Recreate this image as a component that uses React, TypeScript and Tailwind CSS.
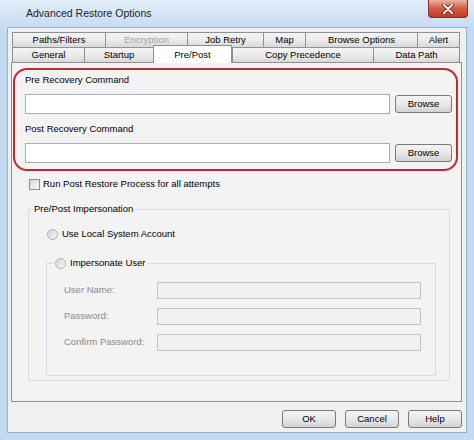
import React from "react"

const tabRow1: [string, number, boolean?][] = [
  ["Paths/Filters", 93],
  ["Encryption", 82, true],
  ["Job Retry", 76],
  ["Map", 42],
  ["Browse Options", 112],
  ["Alert", 43],
]

const tabRow2: [string, number][] = [
  ["General", 72],
  ["Startup", 69],
  ["Pre/Post", 79],
  ["Copy Precedence", 141],
  ["Data Path", 87],
]

function Tab({ label, w, disabled, last }: { label: string; w: number; disabled?: boolean; last?: boolean }) {
  return (
    <div
      style={{ width: w }}
      className={`h-[15px] flex items-center justify-center border-l border-t border-[#8d9096] bg-linear-to-b from-[#f4f4f4] via-[#ebebeb] to-[#d9d9d9] ${last ? "border-r" : ""} ${disabled ? "text-[#a3a3a3]" : "text-black"}`}
    >
      {label}
    </div>
  )
}

function Radio() {
  return (
    <span className="w-[11px] h-[11px] rounded-full border border-[#b0b0b0] bg-linear-to-br from-[#d6d6d6] to-[#f7f7f7] shrink-0" />
  )
}

function Button({ label }: { label: string }) {
  return (
    <button className="h-[18px] w-[54px] rounded-[3px] border border-[#7a7a7a] bg-linear-to-b from-[#f4f4f4] via-[#e9e9e9] to-[#d3d3d3] text-black leading-none">
      {label}
    </button>
  )
}

function CommandBlock({ label, first }: { label: string; first?: boolean }) {
  return (
    <div className={first ? "pt-[4px]" : "pt-[9px]"}>
      <div className="pl-[10px] h-[12px] leading-[12px]">{label}</div>
      <div className="flex items-center pl-[10px] mt-[8px]">
        <div className="w-[365px] h-[20px] bg-white border border-[#abadb3]" />
        <div className="ml-[5px] w-[57px] h-[18px] flex items-center justify-center rounded-[3px] border border-[#7a7a7a] bg-linear-to-b from-[#f4f4f4] via-[#e9e9e9] to-[#d3d3d3]">
          Browse
        </div>
      </div>
    </div>
  )
}

function FieldRow({ label, first }: { label: string; first?: boolean }) {
  return (
    <div className={`flex items-center pl-[10px] ${first ? "mt-[13px]" : "mt-[9px]"}`}>
      <div className="w-[93px] text-[#8a8a8a]">{label}</div>
      <div className="w-[264px] h-[17px] bg-[#f1f1f1] border border-[#c3c3c3]" />
    </div>
  )
}

export default function App() {
  return (
    <div className="w-[474px] h-[440px] flex flex-col bg-[#c3daf1] font-['Liberation_Sans',Arial,sans-serif] text-[9.5px] text-black overflow-hidden">
      {/* title bar */}
      <div className="h-[27px] flex items-start bg-linear-to-b from-[#e2edf9] to-[#c7dcf2]">
        <div className="self-center pl-[26px] text-[10.5px] text-[#1e1e1e]">Advanced Restore Options</div>
        <div className="ml-auto mr-[6px] w-[40px] h-[18px] rounded-b-[4px] border border-t-0 border-[#8b2e22] bg-linear-to-b from-[#eab0a2] via-[#d35a44] to-[#bf3a28] flex items-center justify-center">
          <svg width="12" height="10" viewBox="0 0 12 10">
            <path d="M2 1 L10 9 M10 1 L2 9" stroke="#6b1c12" strokeWidth="3.6" strokeLinecap="round" />
            <path d="M2 1 L10 9 M10 1 L2 9" stroke="#ffffff" strokeWidth="2" strokeLinecap="round" />
          </svg>
        </div>
      </div>

      {/* client area */}
      <div className="mx-[7px] h-[406px] border border-[#98afc7] bg-[#f0f0f0] flex flex-col">
        {/* tabs */}
        <div className="ml-[4px] mt-[4px] w-[448px]">
          <div className="flex">
            {tabRow1.map(([l, w, d], i) => (
              <Tab key={l} label={l} w={w} disabled={d} last={i === tabRow1.length - 1} />
            ))}
          </div>
          <div className="flex items-end h-[15px]">
            {tabRow2.map(([l, w], i) =>
              l === "Pre/Post" ? (
                <div
                  key={l}
                  style={{ width: w }}
                  className="relative top-px z-10 h-[18px] flex items-start pt-[2px] justify-center border-l border-t border-r border-[#8d9096] bg-white"
                >
                  {l}
                </div>
              ) : (
                <Tab key={l} label={l} w={w} last={i === tabRow2.length - 1} />
              )
            )}
          </div>
        </div>

        {/* panel */}
        <div className="ml-[3px] w-[451px] h-[340px] border border-[#8d9096] bg-[#f3f3f3]">
          <div className="ml-[1px] mt-[5px] w-[445px] h-[103px] border-2 border-[#c22a31] rounded-[14px]">
            <CommandBlock label="Pre Recovery Command" first />
            <CommandBlock label="Post Recovery Command" />
          </div>

          <div className="ml-[17px] mt-[7px] h-[12px] flex items-center">
            <span className="w-[11px] h-[11px] border border-[#8e8f8f] bg-linear-to-br from-[#d9d9d9] to-[#fbfbfb]" />
            <span className="ml-[3px]">Run Post Restore Process for all attempts</span>
          </div>

          <fieldset className="ml-[16px] mt-[13px] w-[422px] h-[178px] border border-[#d9dde1] px-[4px]">
            <legend className="h-[12px] leading-[12px] px-px">Pre/Post Impersonation</legend>
            <div className="mt-[13px] pl-[14px] h-[12px] flex items-center">
              <Radio />
              <span className="ml-[4px]">Use Local System Account</span>
            </div>
            <fieldset className="ml-[13px] mt-[17px] w-[390px] h-[119px] border border-[#d9dde1] px-[7px]">
              <legend className="h-[12px] flex items-center px-px">
                <Radio />
                <span className="ml-[4px]">Impersonate User</span>
              </legend>
              <FieldRow label="User Name:" first />
              <FieldRow label="Password:" />
              <FieldRow label="Confirm Password:" />
            </fieldset>
          </fieldset>
        </div>

        {/* dialog buttons */}
        <div className="mt-[8px] pr-[4px] flex justify-end gap-[9px]">
          <Button label="OK" />
          <Button label="Cancel" />
          <Button label="Help" />
        </div>
      </div>
    </div>
  )
}
